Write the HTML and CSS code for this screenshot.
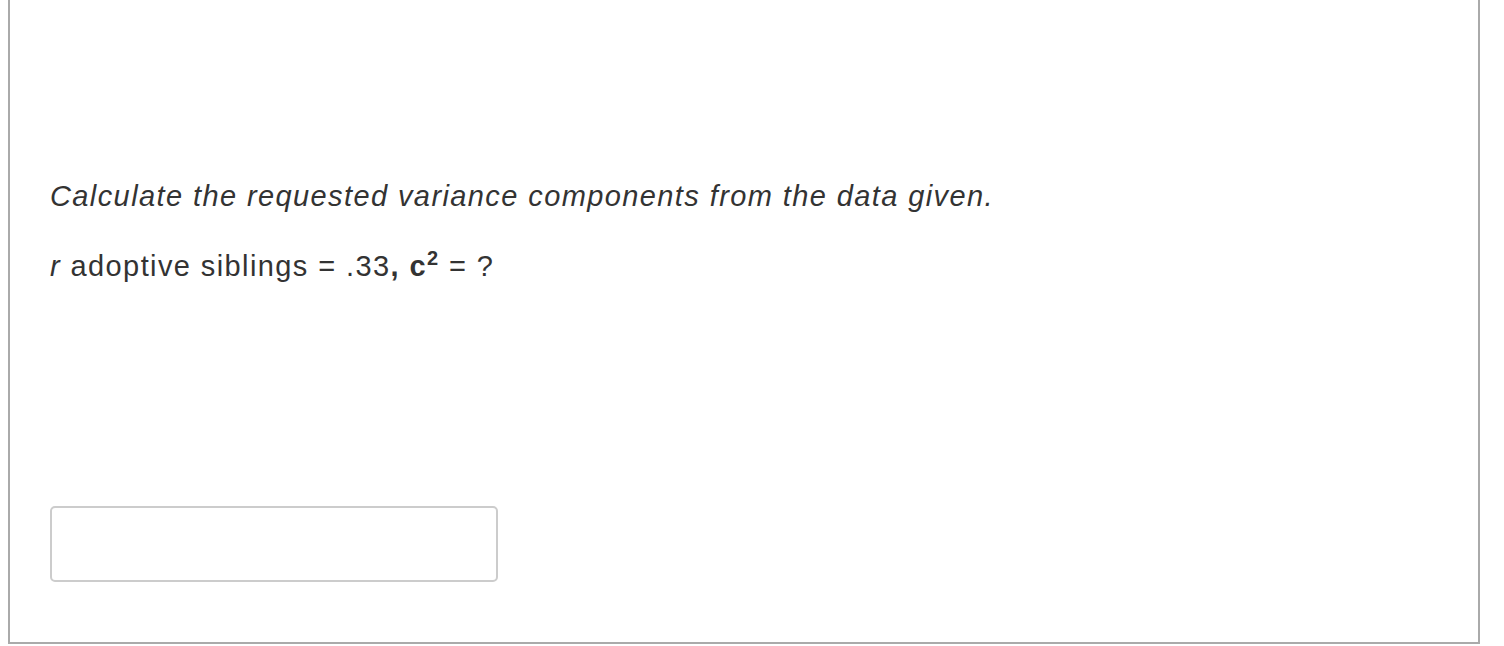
FILE: index.html
```html
<!DOCTYPE html>
<html>
<head>
<meta charset="utf-8">
<link rel="stylesheet" href="styles.css">
</head>
<body>
<div class="panel">
  <p class="prompt">Calculate the requested variance components from the data given.</p>
  <p class="question"><i>r</i> adoptive siblings = .33<b>, c<sup>2</sup></b> = ?</p>
  <input class="answer" type="text">
</div>
</body>
</html>
```
FILE: styles.css
```css
html, body {
  margin: 0;
  padding: 0;
  background: #fff;
}
body {
  width: 1504px;
  height: 646px;
  overflow: hidden;
}
.panel {
  box-sizing: border-box;
  margin-left: 8px;
  width: 1472px;
  height: 644px;
  border: 2px solid #aaaaaa;
  border-top: none;
  padding: 176px 40px 0 40px;
  font-family: "Liberation Sans", Arial, sans-serif;
  color: #333;
  letter-spacing: 1.4px;
}
.prompt {
  margin: 0;
  font-size: 29px;
  font-style: italic;
  line-height: 40px;
}
.question {
  margin: 30px 0 0 0;
  font-size: 29px;
  line-height: 40px;
}
.question sup {
  font-size: 20px;
  line-height: 0;
}
.answer {
  display: block;
  box-sizing: border-box;
  margin-top: 220px;
  width: 448px;
  height: 76px;
  border: 2px solid #cccccc;
  border-radius: 5px;
  background: #fff;
  outline: none;
}
```
